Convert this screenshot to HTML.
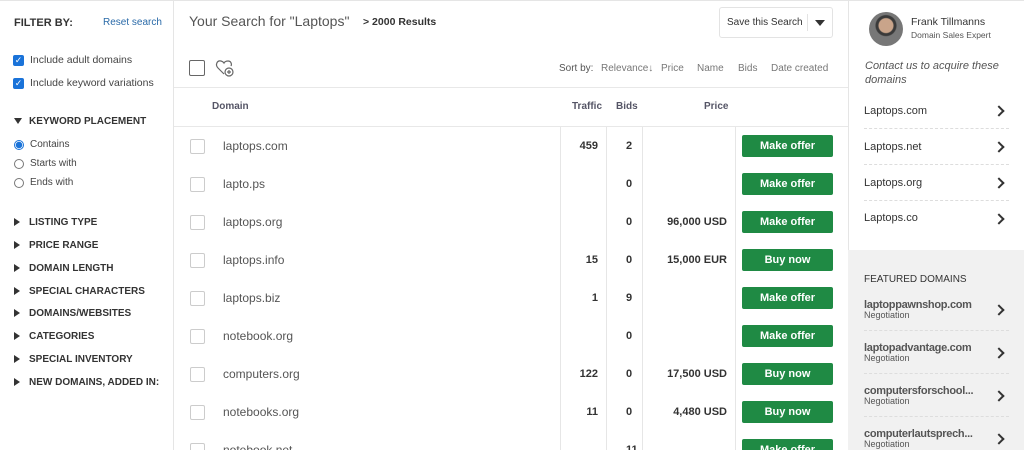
<!DOCTYPE html>
<html><head><style>
*{box-sizing:border-box;margin:0;padding:0}
html,body{width:1024px;height:450px;overflow:hidden}
body{background:#fff;font-family:"Liberation Sans",sans-serif;color:#333;position:relative}
.a{position:absolute}
.s{font-size:11px;color:#444}
.cb{width:11px;height:11px;background:#1a73d9;border-radius:2px;color:#fff;font-size:9px;line-height:11px;text-align:center}
.rd{width:10px;height:10px;border:1px solid #777;border-radius:50%}
.h{font-size:10px;font-weight:bold;color:#333}
.tri{width:0;height:0;border-left:6px solid #333;border-top:4px solid transparent;border-bottom:4px solid transparent}
.row{position:absolute;left:174px;width:674px;height:38px;font-size:12px;color:#555}
.row .c{position:absolute;left:16px;top:12px;width:15px;height:15px;border:1px solid #ccc;border-radius:2px}
.row .d{position:absolute;left:49px;top:12px}
.row .t{position:absolute;right:250px;top:13px;font-size:11px;font-weight:bold;color:#333}
.row .b{position:absolute;left:452px;top:13px;font-size:11px;font-weight:bold;color:#333}
.row .p{position:absolute;right:121px;top:13px;font-size:11px;font-weight:bold;color:#333}
.row .btn{position:absolute;left:568px;top:8px;width:91px;height:22px;background:#1f8a44;color:#fff;font-size:11px;font-weight:bold;text-align:center;line-height:22px;border-radius:2px}
.vl{position:absolute;top:127px;height:323px;width:1px;background:#e6e6e6}
.rl{position:absolute;left:864px;width:145px;font-size:11px;color:#333;height:36px;border-bottom:1px dashed #ddd}
.chev{position:absolute;right:6px;top:14px;width:8px;height:8px;border-right:2px solid #333;border-top:2px solid #333;transform:rotate(45deg)}
.fd{position:absolute;left:864px;width:145px;height:43px;border-bottom:1px dashed #ddd}
.fd b{display:block;font-size:11px;color:#555;font-weight:bold;letter-spacing:-.3px}
.fd i{display:block;font-style:normal;font-size:9px;color:#555;line-height:9px}
</style></head><body>
<div class="a" style="left:0;top:0;width:1024px;height:1px;background:#e5e5e5"></div>
<div class="a" style="left:173px;top:0;width:1px;height:450px;background:#e5e5e5"></div>
<div class="a" style="left:848px;top:0;width:1px;height:250px;background:#e5e5e5"></div>
<div class="a" style="left:848px;top:250px;width:176px;height:200px;background:#f1f1f1"></div>

<div class="a h" style="left:14px;top:17px;font-size:11px">FILTER BY:</div>
<div class="a" style="left:103px;top:17px;font-size:10px;color:#2a6aa8">Reset search</div>
<div class="a cb" style="left:13px;top:55px">✓</div><div class="a s" style="left:30px;top:54px;font-size:10.5px">Include adult domains</div>
<div class="a cb" style="left:13px;top:78px">✓</div><div class="a s" style="left:30px;top:77px;font-size:10.5px">Include keyword variations</div>
<div class="a" style="left:14px;top:118px;border-top:6px solid #333;border-left:4px solid transparent;border-right:4px solid transparent"></div>
<div class="a h" style="left:29px;top:116px">KEYWORD PLACEMENT</div>
<div class="a rd" style="left:14px;top:140px;border-color:#1a73d9;background:radial-gradient(#1a73d9 3px,#fff 3.5px)"></div><div class="a s" style="left:30px;top:139px;font-size:10px">Contains</div>
<div class="a rd" style="left:14px;top:159px"></div><div class="a s" style="left:30px;top:158px;font-size:10px">Starts with</div>
<div class="a rd" style="left:14px;top:178px"></div><div class="a s" style="left:30px;top:177px;font-size:10px">Ends with</div>
<div class="a tri" style="left:14px;top:218px"></div><div class="a h" style="left:29px;top:217px">LISTING TYPE</div>
<div class="a tri" style="left:14px;top:241px"></div><div class="a h" style="left:29px;top:240px">PRICE RANGE</div>
<div class="a tri" style="left:14px;top:264px"></div><div class="a h" style="left:29px;top:263px">DOMAIN LENGTH</div>
<div class="a tri" style="left:14px;top:287px"></div><div class="a h" style="left:29px;top:286px">SPECIAL CHARACTERS</div>
<div class="a tri" style="left:14px;top:309px"></div><div class="a h" style="left:29px;top:308px">DOMAINS/WEBSITES</div>
<div class="a tri" style="left:14px;top:332px"></div><div class="a h" style="left:29px;top:331px">CATEGORIES</div>
<div class="a tri" style="left:14px;top:355px"></div><div class="a h" style="left:29px;top:354px">SPECIAL INVENTORY</div>
<div class="a tri" style="left:14px;top:378px"></div><div class="a h" style="left:29px;top:377px">NEW DOMAINS, ADDED IN:</div>

<div class="a" style="left:189px;top:13px;font-size:14px;color:#555">Your Search for "Laptops"</div>
<div class="a" style="left:363px;top:16px;font-size:10.5px;font-weight:bold;color:#333">&gt; 2000 Results</div>
<div class="a" style="left:719px;top:7px;width:114px;height:31px;border:1px solid #e3e3e3;border-radius:3px"></div>
<div class="a" style="left:727px;top:17px;font-size:10px;color:#333">Save this Search</div>
<div class="a" style="left:807px;top:14px;width:1px;height:17px;background:#e3e3e3"></div>
<div class="a" style="left:815px;top:20px;border-top:6px solid #333;border-left:5px solid transparent;border-right:5px solid transparent"></div>
<div class="a" style="left:189px;top:60px;width:16px;height:16px;border:1px solid #666;border-radius:2px"></div>
<svg class="a" style="left:215px;top:58px" width="20" height="20" viewBox="0 0 20 20" fill="none" stroke="#666" stroke-width="1.2"><path d="M9 16 L3 10 C0 7 2 2 6 3 C8 3.5 9 5 9 5 C9 5 10 3 13 3 C16 3 17 6 16 8"/><circle cx="14" cy="14" r="4" fill="#fff"/><path d="M14 12v4M12 14h4"/></svg>
<div class="a" style="left:559px;top:63px;font-size:10px;color:#555">Sort by:</div>
<div class="a" style="left:601px;top:63px;font-size:10px;color:#777">Relevance↓</div>
<div class="a" style="left:661px;top:63px;font-size:10px;color:#777">Price</div>
<div class="a" style="left:697px;top:63px;font-size:10px;color:#777">Name</div>
<div class="a" style="left:738px;top:63px;font-size:10px;color:#777">Bids</div>
<div class="a" style="left:771px;top:63px;font-size:10px;color:#777">Date created</div>
<div class="a" style="left:174px;top:87px;width:674px;height:1px;background:#e8e8e8"></div>
<div class="a" style="left:212px;top:101px;font-size:10px;color:#556;font-weight:bold">Domain</div>
<div class="a" style="left:572px;top:101px;font-size:10px;color:#556;font-weight:bold">Traffic</div>
<div class="a" style="left:616px;top:101px;font-size:10px;color:#556;font-weight:bold">Bids</div>
<div class="a" style="left:704px;top:101px;font-size:10px;color:#556;font-weight:bold">Price</div>
<div class="a" style="left:174px;top:126px;width:674px;height:1px;background:#e8e8e8"></div>
<div class="vl" style="left:560px"></div><div class="vl" style="left:606px"></div><div class="vl" style="left:642px"></div><div class="vl" style="left:735px"></div>

<div class="row" style="top:127px"><div class="c"></div><div class="d">laptops.com</div><div class="t">459</div><div class="b">2</div><div class="btn">Make offer</div></div>
<div class="row" style="top:165px"><div class="c"></div><div class="d">lapto.ps</div><div class="b">0</div><div class="btn">Make offer</div></div>
<div class="row" style="top:203px"><div class="c"></div><div class="d">laptops.org</div><div class="b">0</div><div class="p">96,000 USD</div><div class="btn">Make offer</div></div>
<div class="row" style="top:241px"><div class="c"></div><div class="d">laptops.info</div><div class="t">15</div><div class="b">0</div><div class="p">15,000 EUR</div><div class="btn">Buy now</div></div>
<div class="row" style="top:279px"><div class="c"></div><div class="d">laptops.biz</div><div class="t">1</div><div class="b">9</div><div class="btn">Make offer</div></div>
<div class="row" style="top:317px"><div class="c"></div><div class="d">notebook.org</div><div class="b">0</div><div class="btn">Make offer</div></div>
<div class="row" style="top:355px"><div class="c"></div><div class="d">computers.org</div><div class="t">122</div><div class="b">0</div><div class="p">17,500 USD</div><div class="btn">Buy now</div></div>
<div class="row" style="top:393px"><div class="c"></div><div class="d">notebooks.org</div><div class="t">11</div><div class="b">0</div><div class="p">4,480 USD</div><div class="btn">Buy now</div></div>
<div class="row" style="top:431px;height:19px;overflow:hidden"><div class="c"></div><div class="d">notebook.net</div><div class="b">11</div><div class="btn">Make offer</div></div>

<div class="a" style="left:869px;top:12px;width:34px;height:34px;border-radius:50%;background:radial-gradient(circle at 50% 40%,#c9a48a 0 7px,#3a3a3a 8px 10px,#777 11px)"></div>
<div class="a" style="left:911px;top:16px;font-size:10.5px;color:#333">Frank Tillmanns</div>
<div class="a" style="left:911px;top:30px;font-size:8.5px;color:#555">Domain Sales Expert</div>
<div class="a" style="left:865px;top:59px;font-size:11px;color:#555;font-style:italic;line-height:14px;width:150px">Contact us to acquire these domains</div>
<div class="rl" style="top:93px"><div style="padding-top:12px">Laptops.com</div><div class="chev"></div></div>
<div class="rl" style="top:129px"><div style="padding-top:12px">Laptops.net</div><div class="chev"></div></div>
<div class="rl" style="top:165px"><div style="padding-top:12px">Laptops.org</div><div class="chev"></div></div>
<div class="rl" style="top:201px;border:none"><div style="padding-top:11px">Laptops.co</div><div class="chev"></div></div>
<div class="a" style="left:864px;top:274px;font-size:10px;color:#333">FEATURED DOMAINS</div>
<div class="fd" style="top:288px"><div style="padding-top:11px"><b>laptoppawnshop.com</b><i>Negotiation</i></div><div class="chev" style="top:18px"></div></div>
<div class="fd" style="top:331px"><div style="padding-top:11px"><b>laptopadvantage.com</b><i>Negotiation</i></div><div class="chev" style="top:18px"></div></div>
<div class="fd" style="top:374px"><div style="padding-top:11px"><b>computersforschool...</b><i>Negotiation</i></div><div class="chev" style="top:18px"></div></div>
<div class="fd" style="top:417px;border:none"><div style="padding-top:11px"><b>computerlautsprech...</b><i>Negotiation</i></div><div class="chev" style="top:18px"></div></div>
</body></html>
